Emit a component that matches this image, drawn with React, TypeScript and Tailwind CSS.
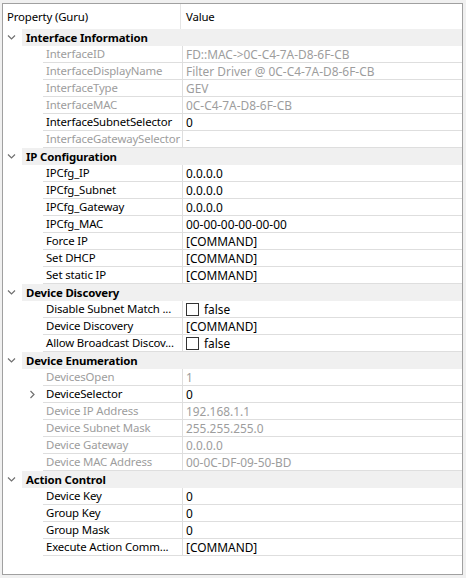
import { ReactNode } from 'react';

type Item = {
  name: string;
  value: string;
  disabled?: boolean;
  check?: boolean;
  expandable?: boolean;
};

type Section = { title: string; items: Item[] };

const SECTIONS: Section[] = [
  {
    title: 'Interface Information',
    items: [
      { name: 'InterfaceID', value: 'FD::MAC->0C-C4-7A-D8-6F-CB', disabled: true },
      { name: 'InterfaceDisplayName', value: 'Filter Driver @ 0C-C4-7A-D8-6F-CB', disabled: true },
      { name: 'InterfaceType', value: 'GEV', disabled: true },
      { name: 'InterfaceMAC', value: '0C-C4-7A-D8-6F-CB', disabled: true },
      { name: 'InterfaceSubnetSelector', value: '0' },
      { name: 'InterfaceGatewaySelector', value: '-', disabled: true },
    ],
  },
  {
    title: 'IP Configuration',
    items: [
      { name: 'IPCfg_IP', value: '0.0.0.0' },
      { name: 'IPCfg_Subnet', value: '0.0.0.0' },
      { name: 'IPCfg_Gateway', value: '0.0.0.0' },
      { name: 'IPCfg_MAC', value: '00-00-00-00-00-00' },
      { name: 'Force IP', value: '[COMMAND]' },
      { name: 'Set DHCP', value: '[COMMAND]' },
      { name: 'Set static IP', value: '[COMMAND]' },
    ],
  },
  {
    title: 'Device Discovery',
    items: [
      { name: 'Disable Subnet Match ...', value: 'false', check: true },
      { name: 'Device Discovery', value: '[COMMAND]' },
      { name: 'Allow Broadcast Discov...', value: 'false', check: true },
    ],
  },
  {
    title: 'Device Enumeration',
    items: [
      { name: 'DevicesOpen', value: '1', disabled: true },
      { name: 'DeviceSelector', value: '0', expandable: true },
      { name: 'Device IP Address', value: '192.168.1.1', disabled: true },
      { name: 'Device Subnet Mask', value: '255.255.255.0', disabled: true },
      { name: 'Device Gateway', value: '0.0.0.0', disabled: true },
      { name: 'Device MAC Address', value: '00-0C-DF-09-50-BD', disabled: true },
    ],
  },
  {
    title: 'Action Control',
    items: [
      { name: 'Device Key', value: '0' },
      { name: 'Group Key', value: '0' },
      { name: 'Group Mask', value: '0' },
      { name: 'Execute Action Comm...', value: '[COMMAND]' },
    ],
  },
];

function Chevron({ open }: { open: boolean }) {
  return (
    <svg width="9" height="9" viewBox="0 0 9 9" className="text-[#707070]">
      {open ? (
        <polyline points="1,2.5 4.5,6 8,2.5" fill="none" stroke="currentColor" strokeWidth="1.2" />
      ) : (
        <polyline points="2.5,1 6,4.5 2.5,8" fill="none" stroke="currentColor" strokeWidth="1.2" />
      )}
    </svg>
  );
}

function Row({ item }: { item: Item }) {
  const tone = item.disabled ? 'text-[#9d9d9d]' : 'text-black';
  let value: ReactNode = item.value;
  if (item.check) {
    value = (
      <span className="flex items-center gap-[5px] h-[16px]">
        <span className="w-[13px] h-[13px] border border-[#333333] bg-white" />
        <span>{item.value}</span>
      </span>
    );
  }
  return (
    <div className="flex h-[17px]">
      <div className="w-[40px] shrink-0 flex items-center pl-[25px]">
        {item.expandable && <Chevron open={false} />}
      </div>
      <div className="flex flex-1 border-b border-[#dedede]">
        <div className={`w-[140px] shrink-0 border-r border-[#dedede] pl-[3px] leading-[16px] whitespace-nowrap overflow-hidden ${tone}`}>
          {item.name}
        </div>
        {/* values use digits/caps, which run a bit wider in the original font */}
        <div className={`flex-1 pl-[3px] leading-[16px] text-[11.9px] tracking-normal whitespace-nowrap overflow-hidden ${tone}`}>{value}</div>
      </div>
    </div>
  );
}

export default function App() {
  return (
    <div className="w-[466px] h-[578px] bg-[#f0f0f0] pl-[2px] pt-[3px] font-['Segoe_UI','Noto_Sans',sans-serif] text-[11.4px] tracking-[-0.15px]">
      <div className="w-[461px] h-[572px] border border-[#a0a0a0] bg-white overflow-hidden">
        {/* header */}
        <div className="flex h-[25px] items-center">
          <div className="w-[178px] pl-[4px] border-r border-[#e5e5e5] h-full flex items-center">Property (Guru)</div>
          <div className="pl-[5px]">Value</div>
        </div>

        {SECTIONS.map((s) => (
          <div key={s.title}>
            <div className="flex h-[17px]">
              <div className="w-[19px] shrink-0 flex items-center pl-[4px]">
                <Chevron open />
              </div>
              <div className="flex-1 bg-[#f0f0f0] pl-[4px] font-bold leading-[17px]">{s.title}</div>
            </div>
            {s.items.map((it) => (
              <Row key={it.name} item={it} />
            ))}
          </div>
        ))}
      </div>
    </div>
  );
}
